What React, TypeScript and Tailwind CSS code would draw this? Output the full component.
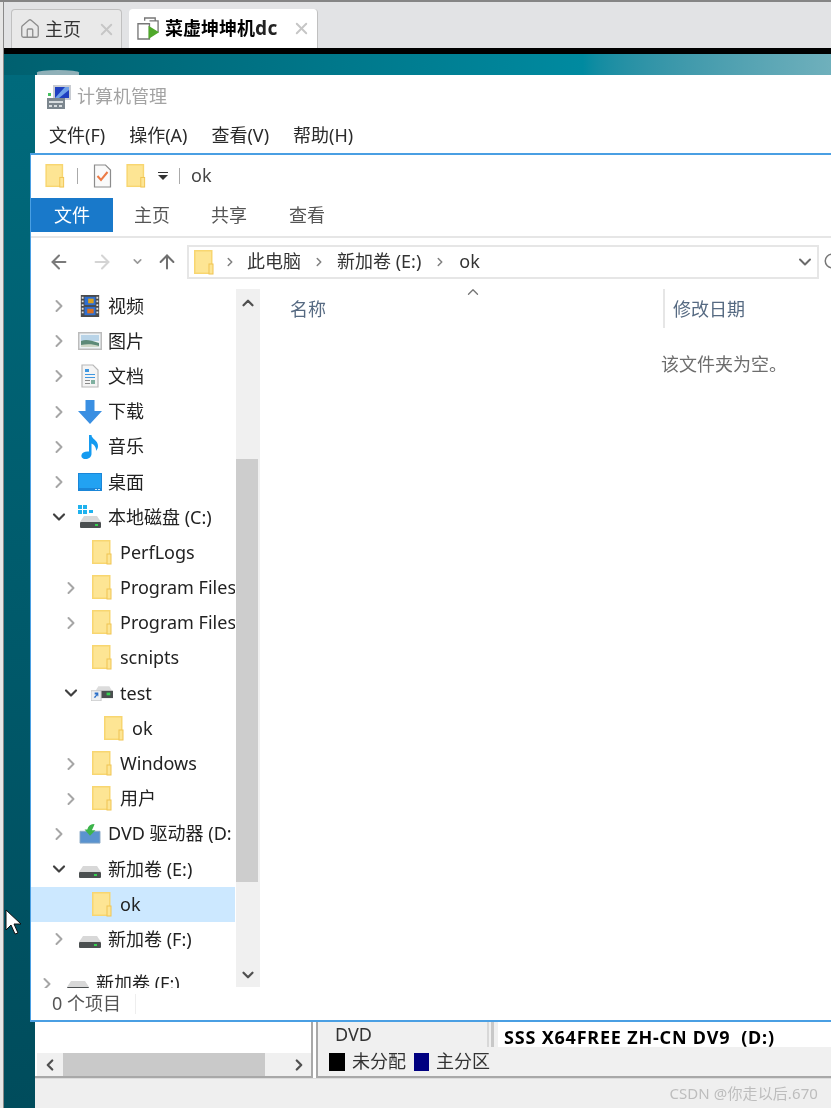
import React from 'react';
import { ArrowLeft, ArrowRight, ArrowUp, ChevronDown, ChevronLeft, ChevronRight, ChevronUp, Home, RotateCw, X } from 'lucide-react';

function Folder({ className = 'w-[20px] h-[25px]' }: { className?: string }) {
    return (
        <svg viewBox="0 0 20 25" className={className}>
            <rect x="0.75" y="0.75" width="17" height="22.5" fill="#fde594" stroke="#f8d670" strokeWidth="1.5" />
            <rect x="15" y="14" width="4" height="10" fill="#fde594" stroke="#f0c452" strokeWidth="1" />
        </svg>
    );
}

function FilmIcon() {
    return (
        <svg viewBox="0 0 24 24" className="w-[22px] h-[24px]">
            <rect x="2" y="0" width="20" height="24" fill="#4a4a4a" />
            <rect x="6" y="2" width="12" height="9" fill="#2f6fd0" />
            <rect x="6" y="13" width="12" height="9" fill="#2f6fd0" />
            <rect x="10" y="4" width="6" height="5" fill="#d8a020" />
            <rect x="9" y="15" width="7" height="5" fill="#d87020" />
            <path d="M3 2h2v2H3zM3 6h2v2H3zM3 10h2v2H3zM3 14h2v2H3zM3 18h2v2H3zM19 2h2v2h-2zM19 6h2v2h-2zM19 10h2v2h-2zM19 14h2v2h-2zM19 18h2v2h-2z" fill="#e4e4e4" />
        </svg>
    );
}

function PictureIcon() {
    return (
        <svg viewBox="0 0 24 18" className="w-[24px] h-[18px]">
            <rect x="0.75" y="0.75" width="22.5" height="16.5" fill="#eef3f6" stroke="#bcbcbc" strokeWidth="1.5" />
            <rect x="3" y="3" width="18" height="6" fill="#b9d4e8" />
            <path d="M3 9c5-2 9-1 18 2v4H3z" fill="#5d8a78" />
            <path d="M3 13c6-1 12-1 18 1v1H3z" fill="#cfd8c8" />
        </svg>
    );
}

function DocIcon() {
    return (
        <svg viewBox="0 0 18 24" className="w-[18px] h-[24px]">
            <path d="M1 1h11l5 5v17H1z" fill="#f4f4f4" stroke="#b8b8b8" strokeWidth="1.2" />
            <path d="M4 5h4v3H4zM4 10h10v1H4zM4 13h10v1H4z" fill="#3f97e0" />
            <path d="M4 16h5v1H4zM4 19h5v1H4z" fill="#8a8a8a" />
            <rect x="10" y="16" width="4" height="4" fill="#7fb0a0" />
        </svg>
    );
}

function DownloadIcon() {
    return (
        <svg viewBox="0 0 24 24" className="w-[24px] h-[24px]">
            <path d="M7.500 0h9v11H24L12 24 0 11h7.500z" fill="#3a8fe2" />
        </svg>
    );
}

function MusicIcon() {
    return (
        <svg viewBox="0 0 18 24" className="w-[18px] h-[24px]">
            <path d="M8 0h2.500c0 4 6.500 5 6.500 11 0 2-.8 3.500-2 5 .3-4-2-6.500-4.500-7.500V19c0 3-3 5-6 5-3 0-4.500-2-4-4 .5-2.500 3.500-4 7.500-3.500z" fill="#159bf0" />
        </svg>
    );
}

function DesktopIcon() {
    return (
        <svg viewBox="0 0 24 18" className="w-[24px] h-[18px]">
            <rect x="0" y="0" width="24" height="18" fill="#1a86d8" />
            <rect x="1" y="1" width="22" height="14" fill="#22a2f2" />
            <path d="M17 16h2v1h-2zM20 16h2v1h-2z" fill="#cde8fb" />
        </svg>
    );
}

function DiskShape() {
    return (
        <>
            <path d="M5 9h14l4 6H1z" fill="#d8d8d8" />
            <rect x="1" y="15" width="22" height="6" rx="1" fill="#4b4f50" />
            <rect x="16" y="17" width="3" height="2" fill="#35d04f" />
        </>
    );
}

function SystemDiskIcon() {
    return (
        <svg viewBox="0 0 24 24" className="w-[24px] h-[24px]">
            <path d="M0 0h4v4H0zM5 0h4v4H5zM0 5h4v4H0zM5 5h4v4H5zM11 5h4v3h-4z" fill="#1fb2ee" />
            <path d="M6 11h13l4 6H2z" fill="#d8d8d8" />
            <rect x="2" y="17" width="21" height="6" rx="1" fill="#4b4f50" />
            <rect x="17" y="19" width="3" height="2" fill="#35d04f" />
        </svg>
    );
}

function DiskIcon() {
    return (
        <svg viewBox="0 0 24 24" className="w-[24px] h-[24px]">
            <DiskShape />
        </svg>
    );
}

function NetDiskIcon() {
    return (
        <svg viewBox="0 0 24 16" className="w-[22px] h-[15px]">
            <path d="M8 0h12l3 5H5z" fill="#dcdcdc" />
            <rect x="10" y="5" width="14" height="8" fill="#4b4f50" />
            <rect x="17" y="7" width="4" height="3" fill="#35d04f" />
            <rect x="0" y="5" width="11" height="11" fill="#eef0f2" stroke="#c4c4c4" />
            <path d="M3 12l3-3H4V7h4v4H7V9.500L4.500 13z" fill="#2a6fc8" />
        </svg>
    );
}

function DvdIcon() {
    return (
        <svg viewBox="0 0 24 22" className="w-[22px] h-[20px]">
            <path d="M1 8h22v13H1z" fill="#5a93cf" stroke="#8aa8c4" />
            <path d="M17 0c-4 0-7 2-8 6H6l6 7 6-6h-4c1-2 2-4 3-7z" fill="#3cb44a" />
        </svg>
    );
}

function CheckDocIcon() {
    return (
        <svg viewBox="0 0 18 24" className="w-[19px] h-[24px]">
            <path d="M1 1h11l5 5v17H1z" fill="#fafafa" stroke="#8c8c8c" strokeWidth="1.2" />
            <path d="M4 12l3.500 4L14 8" fill="none" stroke="#ec7a45" strokeWidth="2" />
        </svg>
    );
}

function ManagerIcon() {
    return (
        <svg viewBox="0 0 24 24" className="w-[24px] h-[24px]">
            <rect x="6" y="0" width="18" height="15" fill="#c8ccd2" />
            <rect x="8" y="2" width="14" height="11" fill="#1f3fc0" />
            <path d="M8 13L18 2h4v3L12 13z" fill="#6fa0e8" />
            <rect x="0" y="13" width="18" height="11" fill="#7c868e" />
            <path d="M2 16h14v2H2zM2 20h3v2H2zM7 20h3v2H7zM12 20h3v2h-3z" fill="#d8dde0" />
            <rect x="1" y="8" width="3" height="3" fill="#46c060" />
        </svg>
    );
}

function VmIcon() {
    return (
        <svg viewBox="0 0 24 24" className="w-[23px] h-[23px]">
            <path d="M8 4V1h11v3M13 4h9v12" fill="none" stroke="#777" strokeWidth="1.4" />
            <path d="M1 7h12v16H1z" fill="#fff" stroke="#777" strokeWidth="1.4" />
            <path d="M12 9l11 7-11 7z" fill="#4fa82a" />
        </svg>
    );
}

function PointerIcon() {
    return (
        <svg viewBox="0 0 17 26" className="w-[17px] h-[26px]">
            <path d="M1 1v20l5-5 4 9 3-1-4-9h7z" fill="#fff" stroke="#111" strokeWidth="1" />
        </svg>
    );
}

type TreeRow = {
    depth: number;
    arrow?: 'right' | 'down';
    icon: React.ReactNode;
    label: string;
    selected?: boolean;
};

const treeRows: TreeRow[] = [
    { depth: 0, arrow: 'right', icon: <FilmIcon />, label: '视频' },
    { depth: 0, arrow: 'right', icon: <PictureIcon />, label: '图片' },
    { depth: 0, arrow: 'right', icon: <DocIcon />, label: '文档' },
    { depth: 0, arrow: 'right', icon: <DownloadIcon />, label: '下载' },
    { depth: 0, arrow: 'right', icon: <MusicIcon />, label: '音乐' },
    { depth: 0, arrow: 'right', icon: <DesktopIcon />, label: '桌面' },
    { depth: 0, arrow: 'down', icon: <SystemDiskIcon />, label: '本地磁盘 (C:)' },
    { depth: 1, icon: <Folder />, label: 'PerfLogs' },
    { depth: 1, arrow: 'right', icon: <Folder />, label: 'Program Files' },
    { depth: 1, arrow: 'right', icon: <Folder />, label: 'Program Files' },
    { depth: 1, icon: <Folder />, label: 'scnipts' },
    { depth: 1, arrow: 'down', icon: <NetDiskIcon />, label: 'test' },
    { depth: 2, icon: <Folder />, label: 'ok' },
    { depth: 1, arrow: 'right', icon: <Folder />, label: 'Windows' },
    { depth: 1, arrow: 'right', icon: <Folder />, label: '用户' },
    { depth: 0, arrow: 'right', icon: <DvdIcon />, label: 'DVD 驱动器 (D:' },
    { depth: 0, arrow: 'down', icon: <DiskIcon />, label: '新加卷 (E:)' },
    { depth: 1, icon: <Folder />, label: 'ok', selected: true },
    { depth: 0, arrow: 'right', icon: <DiskIcon />, label: '新加卷 (F:)' },
];

const depthPadding = ['pl-[22px]', 'pl-[34px]', 'pl-[46px]'];

function TreeItem({ row }: { row: TreeRow }) {
    return (
        <div className={`h-[35.2px] flex items-center whitespace-nowrap ${depthPadding[row.depth]} ${row.selected ? 'bg-[#cce8ff]' : ''}`}>
            <span className="w-[12px] flex justify-center shrink-0">
                {row.arrow === 'right' && <ChevronRight size={20} strokeWidth={2.4} className="text-[#a6a6a6] shrink-0" />}
                {row.arrow === 'down' && <ChevronDown size={20} strokeWidth={2.6} className="text-[#404040] shrink-0" />}
            </span>
            <span className="w-[24px] ml-[13px] mr-[6px] flex justify-center shrink-0">{row.icon}</span>
            <span className="text-[18px] text-[#222]">{row.label}</span>
        </div>
    );
}

function Tree() {
    return (
        <div className="w-[204px] h-[709px] pt-[9.5px] overflow-hidden shrink-0">
            {treeRows.map((row, i) => <TreeItem key={i} row={row} />)}
            <div className="-ml-[12px] mt-[9px]">
                <TreeItem row={{ depth: 0, arrow: 'right', icon: <DiskIcon />, label: '新加卷 (F:)' }} />
            </div>
        </div>
    );
}

function TreeScrollbar() {
    return (
        <div className="w-[24px] ml-[1px] mt-[10px] bg-[#f0f0f0] flex flex-col shrink-0">
            <div className="h-[170px] flex justify-center pt-[5px]">
                <ChevronUp size={18} strokeWidth={3} className="text-[#505050]" />
            </div>
            <div className="h-[423px] w-[22px] bg-[#cdcdcd]"></div>
            <div className="flex-1 flex justify-center items-end pb-[3px]">
                <ChevronDown size={18} strokeWidth={3} className="text-[#505050]" />
            </div>
        </div>
    );
}

function Explorer() {
    return (
        <div className="absolute left-[26px] right-0 top-[99px] bottom-[86px] bg-white border-l border-y-2 border-[#4a9fe3] flex flex-col">
            {/* quick access bar */}
            <div className="h-[43px] flex items-center pl-[14px] pb-[2px] shrink-0">
                <Folder className="w-[20px] h-[24px]" />
                <div className="w-[1px] h-[16px] bg-[#aaa] ml-[12px]"></div>
                <div className="ml-[15px]"><CheckDocIcon /></div>
                <div className="ml-[14px]"><Folder className="w-[20px] h-[24px]" /></div>
                <div className="ml-[11px] flex flex-col items-center w-[11px]">
                    <div className="w-[10px] h-[1px] bg-[#333] mb-[2px]"></div>
                    <div className="w-0 h-0 border-x-[5px] border-x-transparent border-t-[5px] border-t-[#333]"></div>
                </div>
                <div className="w-[1px] h-[16px] bg-[#aaa] ml-[11px]"></div>
                <span className="ml-[11px] text-[18px] text-[#444]">ok</span>
            </div>
            {/* ribbon tabs */}
            <div className="h-[34px] flex items-center shrink-0 text-[18px] text-[#555]">
                <div className="w-[82px] h-full bg-[#1979ca] text-white flex items-center justify-center pt-[1px]">文件</div>
                <span className="ml-[21px] pt-[1px]">主页</span>
                <span className="ml-[41px] pt-[1px]">共享</span>
                <span className="ml-[42px] pt-[1px]">查看</span>
            </div>
            <div className="h-[6px] border-b-2 border-[#e6e6e6] shrink-0"></div>
            {/* address bar */}
            <div className="h-[41px] pt-[7px] flex items-start shrink-0 overflow-hidden">
                <div className="h-[33px] flex items-center pl-[17px] w-[156px] shrink-0">
                    <ArrowLeft size={22} strokeWidth={2.2} className="text-[#7a7a7a] shrink-0" />
                    <ArrowRight size={22} strokeWidth={2.2} className="text-[#d4d4d4] ml-[21px] shrink-0" />
                    <ChevronDown size={13} strokeWidth={3} className="text-[#999] ml-[18px] shrink-0" />
                    <ArrowUp size={22} strokeWidth={2.2} className="text-[#6f6f6f] ml-[12px] shrink-0" />
                </div>
                <div className="w-[632px] h-[34px] border-2 border-[#e6e6e6] flex items-center pl-[5px] shrink-0 text-[18px] text-[#333]">
                    <Folder className="w-[20px] h-[25px]" />
                    <ChevronRight size={14} strokeWidth={2.6} className="text-[#808080] ml-[9px]" />
                    <span className="ml-[10px] pb-[2px]">此电脑</span>
                    <ChevronRight size={14} strokeWidth={2.6} className="text-[#808080] ml-[11px]" />
                    <span className="ml-[11px] pb-[2px]">新加卷 (E:)</span>
                    <ChevronRight size={14} strokeWidth={2.6} className="text-[#808080] ml-[12px]" />
                    <span className="ml-[12px] pb-[2px]">ok</span>
                    <ChevronDown size={20} strokeWidth={2.4} className="text-[#6a6a6a] ml-auto mr-[2px]" />
                </div>
                <RotateCw size={18} strokeWidth={2} className="text-[#777] ml-[4px] mt-[7px] shrink-0" />
            </div>
            {/* tree and list */}
            <div className="flex-1 flex min-h-0">
                <Tree />
                <TreeScrollbar />
                <div className="flex-1 relative">
                    <ChevronUp size={18} strokeWidth={1.8} className="absolute left-[204px] top-[4px] text-[#777]" />
                    <div className="h-[49px] flex items-end text-[18px] text-[#566a82]">
                        <span className="ml-[30px] w-[373px] h-[39px] flex items-center pt-[2px]">名称</span>
                        <span className="h-[39px] border-l-2 border-[#e6e6e6] pl-[8px] flex items-center pt-[2px]">修改日期</span>
                    </div>
                    <div className="pl-[401px] mt-[23px] text-[18px] text-[#6d6d6d]">该文件夹为空。</div>
                </div>
            </div>
            {/* status bar */}
            <div className="h-[33px] flex items-center pl-[21px] shrink-0 text-[18px] text-[#555]">
                <span className="w-[83px]">0 个项目</span>
                <div className="w-[1px] h-[20px] bg-[#eee]"></div>
            </div>
        </div>
    );
}

function Manager() {
    return (
        <div className="flex-1 bg-white flex flex-col min-w-0">
            <div className="h-[43px] flex items-center pl-[12px] shrink-0">
                <ManagerIcon />
                <span className="ml-[6px] text-[18px] text-[#a3a3a3]">计算机管理</span>
            </div>
            <div className="h-[35px] flex items-center pl-[14px] gap-[24px] shrink-0 text-[18px] text-[#2a2a2a]">
                <span>文件(F)</span>
                <span>操作(A)</span>
                <span>查看(V)</span>
                <span>帮助(H)</span>
            </div>
            <div className="flex-1"></div>
            {/* lower panes, mostly covered by the explorer window */}
            <div className="h-[56px] flex shrink-0">
                <div className="w-[278px] flex flex-col justify-end pl-[2px] border-r-2 border-b-2 border-[#a8a8a8]">
                    <div className="h-[23px] bg-[#f0f0f0] flex items-center">
                        <ChevronLeft size={18} strokeWidth={3} className="text-[#505050] ml-[4px]" />
                        <div className="w-[202px] h-full bg-[#c9c9c9] ml-[4px]"></div>
                        <ChevronRight size={18} strokeWidth={3} className="text-[#505050] ml-[25px]" />
                    </div>
                </div>
                <div className="flex-1 ml-[3px] border-l-2 border-b-2 border-[#a8a8a8] flex flex-col min-w-0 bg-[#f0f0f0]">
                    <div className="h-[25px] flex shrink-0">
                        <div className="w-[171px] pl-[17px] text-[18px] text-[#333] flex items-center border-r-2 border-[#d8d8d8]">DVD</div>
                        <div className="w-[3px] ml-[2px] bg-[#c8c8c8]"></div>
                        <div className="flex-1 ml-[4px] bg-white pl-[6px] pt-[6px] flex items-center text-[18px] font-bold text-black whitespace-pre tracking-[0.8px]">SSS X64FREE ZH-CN DV9  (D:)</div>
                    </div>
                    <div className="flex-1 flex items-center pl-[11px] text-[18px] text-[#333]">
                        <div className="w-[16px] h-[18px] bg-black"></div>
                        <span className="ml-[7px]">未分配</span>
                        <div className="w-[15px] h-[18px] bg-[#000080] ml-[8px]"></div>
                        <span className="ml-[7px]">主分区</span>
                    </div>
                </div>
            </div>
            {/* window status bar */}
            <div className="h-[30px] bg-[#efefef] border-t border-[#dcdcdc] flex items-center justify-end pr-[13px] shrink-0 text-[15px] text-[#bdbdbd] tracking-[0.1px]">
                CSDN @你走以后.670
            </div>
        </div>
    );
}

export default function App() {
    return (
        <div className="w-[831px] h-[1108px] flex overflow-hidden border-t-2 border-[#858585] font-['Noto_Sans','Noto_Sans_CJK_SC',sans-serif] blur-[0.5px]">
            <div className="w-[4px] bg-[#e6e6e6] border-r border-[#8a8a8a] shrink-0"></div>
            <div className="flex-1 flex flex-col min-w-0">
                {/* vm tabs */}
                <div className="h-[46px] bg-[#e2e3e5] flex items-end pl-[7px] gap-[7px] shrink-0">
                    <div className="w-[111px] h-[39px] bg-[#e9e9e9] border border-b-0 border-[#c0c0c0] rounded-t-[4px] flex items-center pl-[7px]">
                        <Home size={22} strokeWidth={1.4} className="text-[#8c8c8c]" />
                        <span className="ml-[4px] text-[18px] text-[#333]">主页</span>
                        <X size={19} strokeWidth={2.4} className="text-[#c6c6c6] ml-[16px]" />
                    </div>
                    <div className="w-[189px] h-[39px] bg-white rounded-t-[4px] border-r border-[#c0c0c0] flex items-center pl-[8px]">
                        <VmIcon />
                        <span className="ml-[5px] text-[18px] font-bold text-black whitespace-nowrap">菜虚坤坤机<span className="text-[#222] text-[19px] tracking-[0.5px]">dc</span></span>
                        <X size={19} strokeWidth={2.4} className="text-[#c6c6c6] ml-[14px]" />
                    </div>
                </div>
                <div className="h-[6px] bg-black shrink-0"></div>
                {/* desktop */}
                <div className="flex-1 relative flex flex-col min-h-0">
                    <div className="h-[21px] relative bg-linear-to-r from-[#00606f] via-[#008aa0] via-70% to-[#6fb0bc] shrink-0">
                        <div className="absolute left-[33px] bottom-0 w-[42px] h-[5px] rounded-t-[100%] bg-[#8fb0b8]"></div>
                    </div>
                    <div className="flex-1 flex min-h-0">
                        <div className="w-[31px] bg-linear-to-b from-[#006a7c] to-[#004c5c] shrink-0 relative">
                            <div className="absolute left-[1px] top-[834px]"><PointerIcon /></div>
                        </div>
                        <Manager />
                    </div>
                    <Explorer />
                </div>
            </div>
        </div>
    );
}
